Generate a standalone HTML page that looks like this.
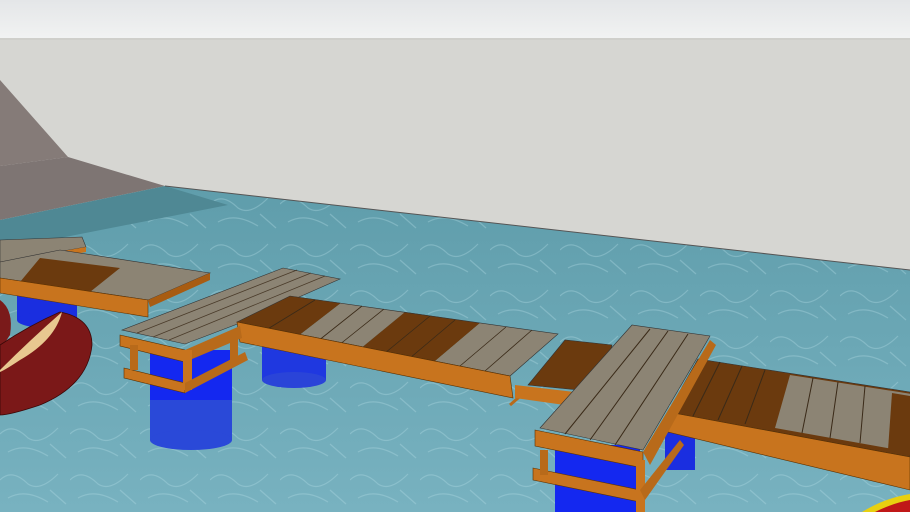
<!DOCTYPE html>
<html><head><meta charset="utf-8"><style>
html,body{margin:0;padding:0;width:910px;height:512px;overflow:hidden;background:#d6d6d2}
svg{display:block}
</style></head><body>
<svg width="910" height="512" viewBox="0 0 910 512" xmlns="http://www.w3.org/2000/svg">
<defs>
<linearGradient id="top" x1="0" y1="0" x2="0" y2="1"><stop offset="0" stop-color="#e4e6e8"/><stop offset="1" stop-color="#f1f2f2"/></linearGradient>
<linearGradient id="wat" x1="0" y1="0" x2="0" y2="1"><stop offset="0" stop-color="#5f9dab"/><stop offset="1" stop-color="#78b2c0"/></linearGradient>
<pattern id="rip" width="70" height="46" patternUnits="userSpaceOnUse"><path d="M0 20 Q12 8 28 24 Q40 32 58 14 M8 38 Q25 28 48 42 M50 30 L66 44" stroke="#b5dce4" stroke-width="1.2" fill="none" opacity=".35"/></pattern>
</defs>
<rect x="0" y="0" width="910" height="38" fill="url(#top)"/>
<rect x="0" y="38" width="910" height="2" fill="#cfcfcb"/>
<polygon points="0,225 165,186 910,270 910,512 0,512" fill="url(#wat)"/>
<polygon points="0,225 165,186 910,270 910,512 0,512" fill="url(#rip)"/>
<polygon points="0,80 68,157 0,166" fill="#857b78"/>
<polygon points="0,166 68,157 165,186 0,220" fill="#7e7573"/>
<polygon points="0,220 165,186 228,205 60,238 0,240" fill="#4f8894"/>
<line x1="165" y1="186" x2="910" y2="270" stroke="#555" stroke-width="1"/>
<rect x="17" y="288" width="60" height="32" fill="#1a2ee0"/>
<ellipse cx="47" cy="320" rx="30" ry="8" fill="#1a2ee0"/>
<rect x="262" y="345" width="64" height="35" fill="#1f38e0"/>
<ellipse cx="294" cy="380" rx="32" ry="8" fill="#2a44d8"/>
<rect x="665" y="430" width="30" height="40" fill="#1a2ee0"/>
<polygon points="0,240 82,237 86,247 0,262" fill="#8c8474" stroke="#333" stroke-width=".6"/>
<polygon points="0,262 86,247 86,252 0,268" fill="#c8741e"/>
<polygon points="0,262 60,250 210,273 148,300 0,278" fill="#8c8474" stroke="#333" stroke-width=".6"/>
<polygon points="40,258 120,268 90,292 20,282" fill="#6b3a0e"/>
<polygon points="0,278 148,300 148,317 0,293" fill="#c8741e" stroke="#5a3000" stroke-width=".6"/>
<polygon points="148,300 210,273 210,280 150,307" fill="#a85c12"/>
<path d="M0,300 Q14,310 10,335 Q0,350 0,350Z" fill="#7a1a1a"/>
<path d="M0,345 Q30,325 60,312 Q92,318 92,345 Q88,385 40,405 Q10,415 0,415Z" fill="#7b1818" stroke="#3a0808" stroke-width=".8"/>
<path d="M0,370 Q30,340 62,312 Q55,340 20,360 Q5,370 0,372Z" fill="#e8c890"/>
<!-- middle-left platform barrel -->
<rect x="150" y="350" width="82" height="90" fill="#1428f0"/>
<rect x="150" y="400" width="82" height="40" fill="#2a49d8"/>
<ellipse cx="191" cy="440" rx="41" ry="10" fill="#2a49d8"/>
<!-- platform top -->
<polygon points="122,330 283,268 340,279 240,323 185,344" fill="#8c8474" stroke="#333" stroke-width=".6"/>
<g stroke="#4a3b2a" stroke-width=".8"><line x1="137" y1="333" x2="297" y2="270"/><line x1="153" y1="337" x2="311" y2="273"/><line x1="169" y1="340" x2="325" y2="276"/></g>
<!-- long walkway -->
<polygon points="237,322 290,296 341,303 297,337" fill="#6b3a0e"/>
<polygon points="297,337 341,303 405,312 360,349" fill="#8c8474"/>
<polygon points="360,349 405,312 480,323 434,362" fill="#6b3a0e"/>
<polygon points="434,362 480,323 558,334 510,376" fill="#8c8474"/>
<polygon points="237,322 290,296 558,334 510,376" fill="none" stroke="#333" stroke-width=".6"/>
<g stroke="#3a2a18" stroke-width=".8">
<line x1="266" y1="330" x2="315" y2="300"/><line x1="318" y1="341" x2="362" y2="306"/><line x1="339" y1="345" x2="384" y2="309"/><line x1="385" y1="353" x2="430" y2="316"/><line x1="410" y1="358" x2="455" y2="320"/><line x1="460" y1="366" x2="506" y2="327"/><line x1="485" y1="371" x2="532" y2="330"/></g>
<polygon points="237,322 510,376 513,398 240,342" fill="#c8741e" stroke="#5a3000" stroke-width=".6"/>
<line x1="510" y1="405" x2="525" y2="392" stroke="#b86a1a" stroke-width="3"/>
<!-- platform frame -->
<polygon points="120,335 185,350 185,362 120,346" fill="#c8741e" stroke="#5a3000" stroke-width=".6"/>
<polygon points="185,350 240,326 242,338 185,362" fill="#b86a1a"/>
<polygon points="124,368 185,383 185,393 124,378" fill="#c8741e" stroke="#5a3000" stroke-width=".6"/>
<rect x="130" y="345" width="8" height="25" fill="#b86a1a"/>
<rect x="183" y="350" width="9" height="40" fill="#c8741e"/>
<rect x="230" y="335" width="8" height="25" fill="#b86a1a"/>
<polygon points="185,383 245,352 248,360 185,393" fill="#b86a1a"/>
<!-- connector -->
<polygon points="528,385 565,340 612,345 600,392" fill="#6b3a0e" stroke="#333" stroke-width=".6"/>
<polygon points="515,385 600,395 600,410 515,398" fill="#c8741e"/>
<!-- right walkway -->
<polygon points="668,412 698,359 910,392 910,457" fill="#6b3a0e" stroke="#333" stroke-width=".6"/>
<polygon points="775,428 790,375 912,394 910,452" fill="#8c8474"/>
<polygon points="888,450 892,393 910,396 910,455" fill="#6b3a0e"/>
<g stroke="#3a2a18" stroke-width="1"><line x1="693" y1="416" x2="720" y2="362"/><line x1="718" y1="420" x2="742" y2="366"/><line x1="745" y1="424" x2="765" y2="370"/><line x1="802" y1="433" x2="813" y2="378"/><line x1="830" y1="438" x2="838" y2="382"/><line x1="860" y1="443" x2="865" y2="386"/></g>
<polygon points="668,412 910,457 910,490 668,432" fill="#c8741e" stroke="#5a3000" stroke-width=".6"/>
<!-- right platform -->
<rect x="555" y="445" width="85" height="67" fill="#1428f0"/>
<polygon points="540,428 632,325 710,336 643,450" fill="#8c8474" stroke="#333" stroke-width=".6"/>
<g stroke="#3a2a18" stroke-width="1"><line x1="565" y1="434" x2="650" y2="329"/><line x1="590" y1="440" x2="668" y2="331"/><line x1="615" y1="445" x2="688" y2="334"/></g>
<polygon points="535,430 643,452 643,468 535,446" fill="#c8741e" stroke="#5a3000" stroke-width=".6"/>
<polygon points="643,452 710,340 716,345 650,465" fill="#b86a1a"/>
<polygon points="533,468 640,490 640,502 533,480" fill="#c8741e" stroke="#5a3000" stroke-width=".6"/>
<rect x="540" y="450" width="8" height="25" fill="#b86a1a"/>
<rect x="636" y="460" width="9" height="52" fill="#c8741e"/>
<polygon points="640,490 680,440 684,445 645,500" fill="#b86a1a"/>
<path d="M862,512 Q885,498 910,494 L910,512Z" fill="#e8d010"/>
<path d="M875,512 Q893,503 910,500 L910,512Z" fill="#c01818"/>
</svg>
</body></html>
